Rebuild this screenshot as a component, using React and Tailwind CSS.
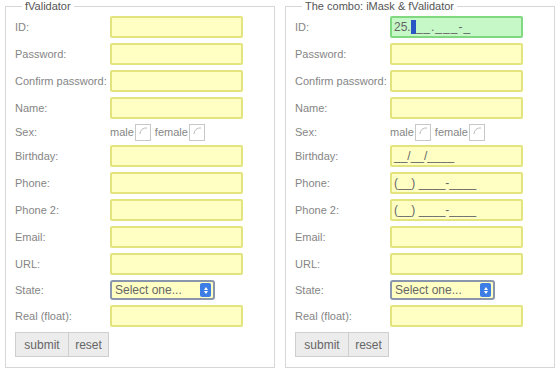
import React from "react";

const font = { fontFamily: '"Liberation Sans", Arial, sans-serif' };

function Radio() {
  return (
    <span className="ml-[1px] inline-flex h-[17px] w-[16px] items-start justify-start border border-[#c8c8c8] bg-white">
      <svg width="10" height="8" viewBox="0 0 10 8" className="ml-[3px] mt-[2px]">
        <path d="M1 7 A6 6 0 0 1 8 1" fill="none" stroke="#bbb" strokeWidth="1" />
      </svg>
    </span>
  );
}

function Field({ value, green }) {
  return (
    <div
      className={`flex h-[22px] w-[133px] items-center rounded-[2px] border-2 px-[2px] text-[12px] text-[#666] ${
        green ? "border-[#80d880] bg-[#c6f7c6]" : "border-[#e4e47e] bg-[#ffffc4]"
      }`}
    >
      {value}
    </div>
  );
}

function Row({ label, children, h = "h-[22px]" }) {
  return (
    <div className={`flex items-center ${h}`}>
      <span className="w-[95px] shrink-0 whitespace-nowrap text-[11px] text-[#858585]">{label}</span>
      {children}
    </div>
  );
}

function Form({ title, masked }) {
  return (
    <fieldset className="w-[270px] border border-[#d6d6d6] px-[9px] pb-[10px] pt-[4px]">
      <legend className="ml-[7px] px-[3px] text-[11px] leading-[12px] text-[#555]">{title}</legend>
      <div className="flex flex-col gap-[5px]">
        <Row label="ID:">
          <Field
            green={masked}
            value={
              masked ? (
                <span className="flex items-center">
                  25.<span className="inline-block h-[14px] w-[5px] bg-[#2a56c6]" />
                  <span className="tracking-[1px]">__.___-_</span>
                </span>
              ) : null
            }
          />
        </Row>
        <Row label="Password:">
          <Field />
        </Row>
        <Row label="Confirm password:">
          <Field />
        </Row>
        <Row label="Name:">
          <Field />
        </Row>
        <Row label="Sex:" h="h-[16px]">
          <span className="flex items-center text-[11px] text-[#858585]">
            male
            <Radio />
            <span className="ml-[4px]">female</span>
            <Radio />
          </span>
        </Row>
        <Row label="Birthday:">
          <Field value={masked ? "__/__/____" : null} />
        </Row>
        <Row label="Phone:">
          <Field value={masked ? "(__) ____-____" : null} />
        </Row>
        <Row label="Phone 2:">
          <Field value={masked ? "(__) ____-____" : null} />
        </Row>
        <Row label="Email:">
          <Field />
        </Row>
        <Row label="URL:">
          <Field />
        </Row>
        <Row label="State:" h="h-[20px]">
          <div className="flex h-[20px] w-[105px] items-center justify-between rounded-[3px] border-2 border-[#8a96ac] bg-[#ffffc4] pl-[3px] pr-[2px] text-[12px] text-[#666]">
            <span>Select one...</span>
            <span className="flex h-[14px] w-[11px] flex-col items-center justify-center gap-[1px] rounded-[2px] bg-[#3c7ee6]">
              <span className="h-0 w-0 border-x-[2px] border-b-[3px] border-x-transparent border-b-white" />
              <span className="h-0 w-0 border-x-[2px] border-t-[3px] border-x-transparent border-t-white" />
            </span>
          </div>
        </Row>
        <Row label="Real (float):">
          <Field />
        </Row>
        <div className="flex">
          <button className="h-[25px] w-[54px] border border-[#cfcfcf] bg-[#ececec] text-[12px] text-[#666]">submit</button>
          <button className="h-[25px] w-[40px] border border-l-0 border-[#cfcfcf] bg-[#ececec] text-[12px] text-[#666]">reset</button>
        </div>
      </div>
    </fieldset>
  );
}

export default function App() {
  return (
    <div className="flex h-[376px] w-[560px] items-start gap-[10px] bg-white pl-[5px]" style={font}>
      <Form title="fValidator" />
      <Form title="The combo: iMask & fValidator" masked />
    </div>
  );
}
